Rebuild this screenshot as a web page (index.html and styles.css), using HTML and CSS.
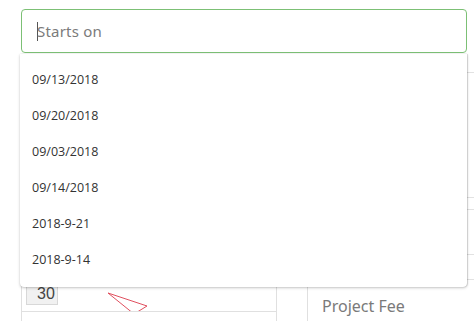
FILE: index.html
```html
<!DOCTYPE html>
<html>
<head>
<meta charset="utf-8">
<link rel="stylesheet" href="styles.css">
</head>
<body>
<div class="page">
  <div class="field">
    <div class="input"><span class="caret"></span><span class="placeholder">Starts on</span></div>
    <ul class="dropdown">
      <li>09/13/2018</li>
      <li>09/20/2018</li>
      <li>09/03/2018</li>
      <li>09/14/2018</li>
      <li>2018-9-21</li>
      <li>2018-9-14</li>
    </ul>
  </div>
  <div class="sheet">
    <div class="srow r1"></div>
    <div class="srow r2"></div>
    <div class="srow r3"></div>
    <div class="srow r4"></div>
    <div class="srow r5"></div>
    <div class="bottom">
      <div class="cell left">
        <div class="sub top"><span class="num">30</span>
          <svg class="tri" width="42" height="24" viewBox="0 0 42 24"><polygon points="1,1 40,14 27,22" fill="none" stroke="#e0505f" stroke-width="1"/></svg>
        </div>
        <div class="sub"><span class="frag">y</span></div>
      </div>
      <div class="cell mid"></div>
      <div class="cell right"><span class="fee">Project Fee</span></div>
    </div>
  </div>
</div>
</body>
</html>
```
FILE: styles.css
```css
html, body { margin: 0; padding: 0; background: #fff; }
body { width: 474px; height: 321px; overflow: hidden; font-family: "Noto Sans", "Open Sans", sans-serif; }
.page { padding-top: 9px; padding-left: 21px; }
.field { position: relative; width: 446px; z-index: 2; }
.input {
  box-sizing: border-box; height: 44px; border: 1px solid #7cc075; border-radius: 4px;
  display: flex; align-items: center; padding-left: 15px; background: #fff;
}
.caret { width: 1px; height: 19px; background: #555; margin-right: -1px; }
.placeholder { font-family: "Noto Sans", sans-serif; font-size: 15px; color: #7b7b7b; letter-spacing: 0.2px; }
.dropdown {
  position: absolute; top: 45px; left: -1px; width: 447px; margin: 0; padding: 8px 0 9px 0;
  list-style: none; background: #fff; border-radius: 0 0 4px 4px;
  box-shadow: 0 1px 3px rgba(0,0,0,0.22), 1px 0 1px rgba(0,0,0,0.12), 0 0 1px rgba(0,0,0,0.15);
}
.dropdown li {
  height: 36px; line-height: 36px; padding-left: 12px; font-family: "Open Sans", sans-serif;
  font-size: 12.5px; color: #333;
}
.sheet { width: 453px; }
.srow { border-bottom: 1px solid #e2e2e2; }
.r1 { height: 19px; }
.r2 { height: 124px; }
.r3 { height: 11px; }
.r4 { height: 44px; }
.r5 { height: 24px; }
.bottom { display: grid; grid-template-columns: 255px 31px 1fr; height: 41px; overflow: hidden; }
.cell { border-left: 1px solid #e0e0e0; }
.left { position: relative; }
.sub.top { height: 31px; border-bottom: 1px solid #e0e0e0; position: relative; }
.sub { height: 9px; overflow: hidden; }
.num {
  display: inline-flex; align-items: center; justify-content: center; box-sizing: border-box;
  width: 32px; height: 23px; margin: 2px 0 0 4px; background: #f1f1f1; border: 1px solid #d8d8d8;
  font-family: "Liberation Sans", sans-serif; font-size: 16px; color: #444; padding-left: 8px;
}
.tri { position: absolute; left: 85px; top: 12px; }
.frag { font-family: "Liberation Sans", sans-serif; font-size: 13px; color: #555; margin-left: 35px; line-height: 13px; display: inline-block; margin-top: 1px; }
.fee { display: block; padding: 16px 0 0 14px; font-family: "Noto Sans", sans-serif; font-size: 16px; line-height: 20px; color: #7a7a7a; }
```
